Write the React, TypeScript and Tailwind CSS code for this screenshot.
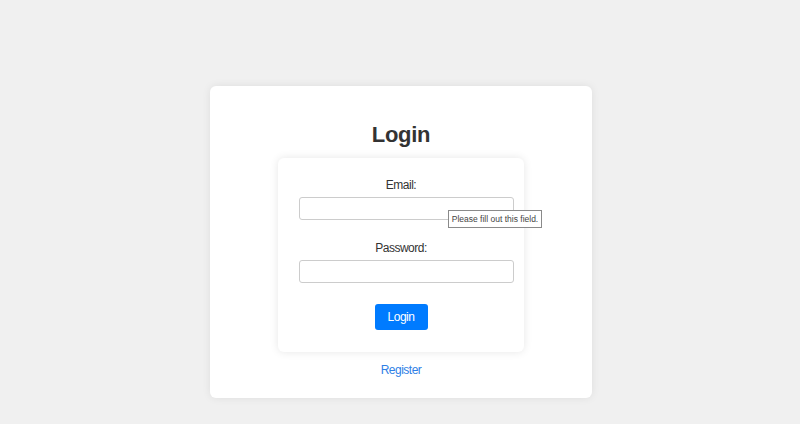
export default function App() {
  return (
    <div className="min-h-screen w-full bg-[#f0f0f0] pt-[86px] font-['Liberation_Sans',Arial,sans-serif]">
      <div className="mx-auto flex w-[382px] translate-x-[1px] flex-col items-center rounded-[6px] bg-white pb-[20px] pt-[35px] shadow-[0_0_8px_rgba(0,0,0,0.08)]">
        <h1 className="text-[22px] font-bold leading-[28px] tracking-[-0.3px] text-[#333]">Login</h1>

        <form className="relative mt-[9px] flex w-[246px] flex-col items-center rounded-[6px] bg-white px-[21px] pb-[22px] pt-[19px] shadow-[0_0_8px_rgba(0,0,0,0.1)]">
          <label className="text-[12px] leading-[16px] tracking-[-0.5px] text-[#333]">Email:</label>
          <input
            type="email"
            className="mt-[4px] h-[23px] w-[215px] shrink-0 self-start rounded-[3px] border border-[#ccc] bg-white outline-none"
          />
          <label className="mt-[20px] text-[12px] leading-[16px] tracking-[-0.5px] text-[#333]">Password:</label>
          <input
            type="password"
            className="mt-[4px] h-[23px] w-[215px] shrink-0 self-start rounded-[3px] border border-[#ccc] bg-white outline-none"
          />
          <button
            type="button"
            className="mt-[21px] h-[26px] w-[53px] rounded-[3px] bg-[#007bff] text-[12px] tracking-[-0.5px] text-white"
          >
            Login
          </button>

          {/* validation tooltip */}
          <div className="absolute left-[170px] top-[52px] flex h-[18px] w-[94px] items-center justify-center border border-[#8a8a8a] bg-white text-[8.5px] text-[#444]">
            Please fill out this field.
          </div>
        </form>

        <a className="mt-[10px] text-[12px] leading-[16px] tracking-[-0.5px] text-[#2f7fe6]">Register</a>
      </div>
    </div>
  );
}
